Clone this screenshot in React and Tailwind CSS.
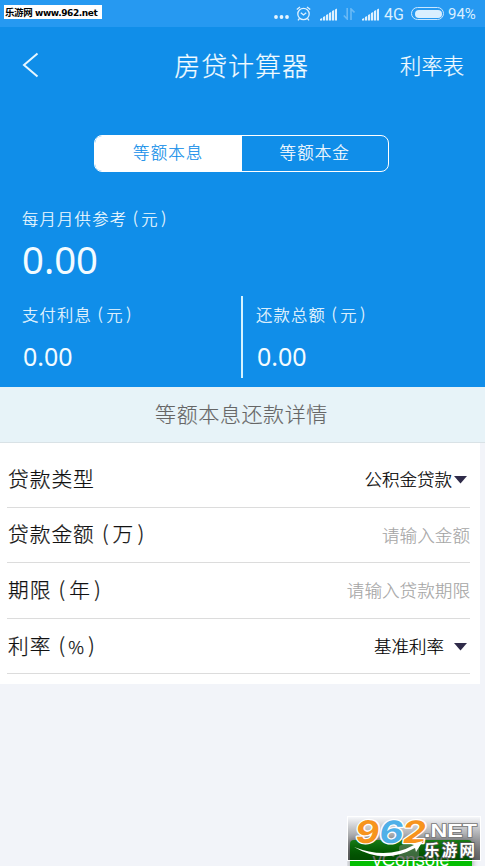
import React, { useState } from "react";

const tabs = ["等额本息", "等额本金"];

const Unit = ({ children }) => (
  <>
    <span className="inline-block w-[0.86em] -translate-y-px text-center pl-[0.2em]">(</span>
    {children}
    <span className="inline-block w-[0.7em] -translate-y-px text-center">)</span>
  </>
);

const Signal = ({ className }) => (
  <svg viewBox="0 0 17 13" className={className} fill="#dff1ff">
    <path d="M0 12.500v-1.500l2.200-1v2.500zM3 12.500v-3.500l2.200-1v4.500zM6 12.500v-5.500l2.200-1v6.500zM9 12.500v-7.500l2.200-1v8.500zM12 12.500v-9.500l2.200-1v10.500zM15 12.500v-11l2-1v12z" />
  </svg>
);

const StatusBar = () => (
  <div className="flex h-[27px] items-start bg-[#2699f1] font-normal text-[#d9efff]">
    <div className="ml-1 mt-[5px] h-[14px] w-[98px] whitespace-nowrap bg-white pl-[1px] text-[9.5px] font-bold leading-[14px] text-black">
      <span className="inline-block w-[30px] tracking-[-0.4px]">乐游网</span>
      <span className="font-['DejaVu_Sans',sans-serif] text-[9px] tracking-[-0.4px]">www.962.net</span>
    </div>
    <svg viewBox="0 0 16 4" className="ml-[172px] mt-[15px] h-1 w-4" fill="#e6f5ff">
      <circle cx="2" cy="2" r="1.900" />
      <circle cx="7.500" cy="2" r="1.900" />
      <circle cx="13" cy="2" r="1.900" />
    </svg>
    <svg viewBox="0 0 15 16" className="ml-[6px] mt-[6px] h-4 w-[15px]" fill="none" stroke="#dff1ff" strokeWidth="1.300">
      <circle cx="7.500" cy="8" r="5.700" />
      <path d="M0.800 3.500 4 0.900M14.200 3.500 11 0.900M4.800 6.800l2.700 2.200 2.700-2.200M3.500 12.500 2 14.300M11.500 12.500l1.500 1.800" />
    </svg>
    <Signal className="ml-[9px] mt-[7.500px] h-[13px] w-[17px]" />
    <svg viewBox="0 0 12 12" className="ml-[6px] mt-2 h-3 w-3" fill="none" stroke="#69b9f6" strokeWidth="1.600">
      <path d="M4.200 0v11L0.800 7.500M8 12V1l3.500 3.500" />
    </svg>
    <Signal className="ml-[7px] mt-[7.500px] h-[13px] w-[17px]" />
    <span className="ml-[5px] mt-[5px] w-[21px] font-['Roboto',sans-serif] text-[16px] leading-[19px]">4G</span>
    <div className="ml-[6px] mt-[7px] flex h-[13px] w-[33px] rounded-full border border-[#c9e7ff] py-[1.500px] pl-[3px] pr-[1.500px]">
      <div className="flex-1 rounded-full bg-[#d9efff]" />
    </div>
    <span className="ml-[4px] mt-[5px] font-['Roboto',sans-serif] text-[15px] leading-[19px]">94%</span>
  </div>
);

const Amount = ({ label, className }) => (
  <div className={className}>
    <p className="text-[16.300px] leading-6 tracking-[1.250px]">
      {label}
      <Unit>元</Unit>
    </p>
    <p className="mt-3 pl-px font-['Noto_Sans',sans-serif] text-[25px] font-normal leading-9 [-webkit-text-stroke:0]">0.00</p>
  </div>
);

const Row = ({ label, unit, children }) => (
  <div className="flex h-[55.600px] items-center justify-between border-b-[1.500px] border-[#dcdcdc]">
    <span className="-mt-[2px] pl-[1px] text-[20.700px] tracking-[1px] text-[#111] [-webkit-text-stroke:0.25px]">
      {label}
      {unit && <Unit>{unit}</Unit>}
    </span>
    {children}
  </div>
);

const Arrow = () => (
  <svg viewBox="0 0 13 8" className="mt-px h-2 w-[13px]" fill="#2f2b49">
    <path d="M0 0h13L6.500 7.500z" />
  </svg>
);

// floating debug button with the site badge over it
const Badge = () => (
  <div className="absolute left-[347px] top-[816px] h-[50px] w-[134px] overflow-hidden">
    <div className="absolute left-[3px] top-6 h-10 w-[122px] rounded-[4px] bg-[#04be02] pt-[4px] text-center font-['Liberation_Sans',sans-serif] text-[18.500px] font-normal leading-8 text-white shadow-[0_0_6px_rgba(0,0,0,0.4)]">
      vConsole
    </div>
    <div className="absolute inset-x-0 top-0 h-[45px] border border-white bg-linear-to-b from-white/30 to-black/60" />
    <svg viewBox="0 0 134 50" className="absolute inset-0 h-full w-full">
      <rect x="52" y="29" width="20" height="14" rx="3" fill="#888" opacity="0.45" />
      <g transform="translate(5 0) skewX(-8)" fontFamily="Inter, sans-serif" fontWeight="bold" fontSize="31" stroke="#fff" strokeWidth="2.500" paintOrder="stroke" strokeLinejoin="round">
        <text x="6" y="27" fill="#f7941d" textLength="24" lengthAdjust="spacingAndGlyphs">9</text>
        <text x="30" y="27" fill="#4fb0e8" textLength="24" lengthAdjust="spacingAndGlyphs">6</text>
        <text x="53" y="27" fill="#f7941d" textLength="24" lengthAdjust="spacingAndGlyphs">2</text>
      </g>
      <text x="77" y="21" fill="#fff" stroke="#777" strokeWidth="1.500" paintOrder="stroke" fontFamily="Liberation Sans, sans-serif" fontWeight="bold" fontSize="18" textLength="53" lengthAdjust="spacingAndGlyphs">.NET</text>
      <text x="77" y="40" fill="#fff" stroke="#555" strokeWidth="1.500" paintOrder="stroke" fontFamily="Noto Sans CJK SC, sans-serif" fontWeight="bold" fontSize="15.500" textLength="51">乐游网</text>
      <path d="M7 31q33 13 60-2l-3-1 12-3-7 11-1-4Q37 49 7 31z" fill="#fff" />
    </svg>
  </div>
);

export default function App() {
  const [active, setActive] = useState(0);

  return (
    <div className="relative h-[866px] w-[486px] overflow-hidden border-r border-white bg-[#f2f4f9] font-['Noto_Sans_CJK_SC',sans-serif] font-light">
      <StatusBar />
      <section className="h-[360px] bg-[#108ee9] text-[#f2fbff] [-webkit-text-stroke:0.2px]">
        <header className="flex h-[75px] items-center justify-between pl-[22px] pr-[21px]">
          <svg viewBox="0 0 18 26" className="h-[26px] w-[18px]" fill="none" stroke="#e7f7ff" strokeWidth="2">
            <path d="M15.500 1.500 2 13l13.500 11.500" />
          </svg>
          <h1 className="ml-[43px] text-[26px] tracking-[0.900px]">房贷计算器</h1>
          <button className="text-[21.300px]">利率表</button>
        </header>

        <div className="mx-auto mt-[33px] flex h-[37px] w-[295px] translate-x-[-1px] overflow-hidden rounded-[8px] border-[1.500px] border-white">
          {tabs.map((tab, i) => (
            <button
              key={tab}
              onClick={() => setActive(i)}
              className={`flex-1 pb-[2px] text-[16.500px] tracking-[1.100px] ${
                active === i ? "bg-white text-[#108ee9]" : "text-white"
              }`}
            >
              {tab}
            </button>
          ))}
        </div>

        <div className="pl-[22px] pt-[34px]">
          <p className="text-[16.300px] leading-6 tracking-[1.250px]">
            每月月供参考
            <Unit>元</Unit>
          </p>
          <p className="mt-[4px] font-['Noto_Sans',sans-serif] text-[38.300px] font-normal leading-[50px] [-webkit-text-stroke:0]">0.00</p>
        </div>

        <div className="mt-[12px] flex h-[82px] pl-[22px]">
          <Amount label="支付利息" className="w-[219px] pt-[6px]" />
          <Amount label="还款总额" className="border-l-2 border-[#d5f3ff] pl-[13px] pt-[6px]" />
        </div>
      </section>

      <h2 className="h-[56px] border-b border-[#d9e2e6] bg-[#e7f3f8] text-center text-[21px] leading-[52px] tracking-[0.600px] text-[#666] [-webkit-text-stroke:0.15px]">
        <span className="-ml-[2px]">等额本息还款详情</span>
      </h2>

      <section className="mr-[5px] h-[241px] bg-white pl-[7px] pr-[10px] pt-[9px]">
        <Row label="贷款类型">
          <span className="flex items-center pr-[3px] text-[17.500px] text-black [-webkit-text-stroke:0.2px]">
            公积金贷款
            <span className="ml-[2px]"><Arrow /></span>
          </span>
        </Row>
        <Row label="贷款金额" unit="万">
          <span className="text-[17.600px] text-[#a5a5a5] [-webkit-text-stroke:0.15px]">请输入金额</span>
        </Row>
        <Row label="期限" unit="年">
          <span className="text-[17.600px] text-[#a5a5a5] [-webkit-text-stroke:0.15px]">请输入贷款期限</span>
        </Row>
        <Row label="利率" unit={<span className="relative -left-px text-[17.500px] tracking-normal">%</span>}>
          <span className="flex items-center pr-[3px] text-[17.500px] text-black [-webkit-text-stroke:0.2px]">
            基准利率
            <span className="ml-[10px]"><Arrow /></span>
          </span>
        </Row>
      </section>

      <Badge />
    </div>
  );
}
